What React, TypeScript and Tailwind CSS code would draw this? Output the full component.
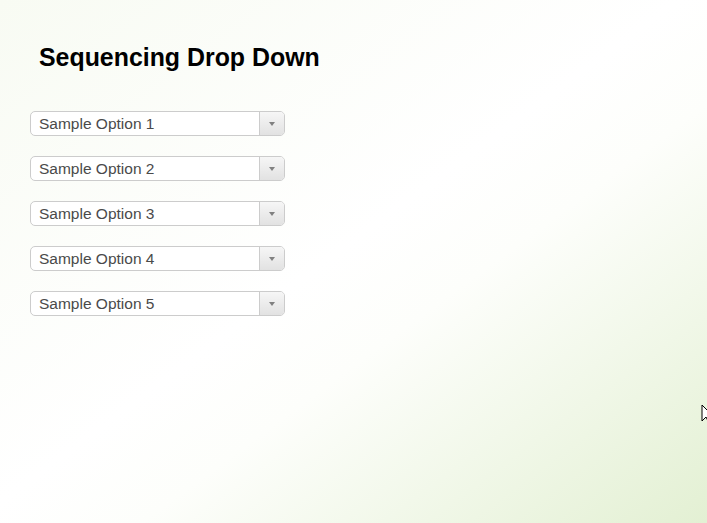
const options = ["Sample Option 1", "Sample Option 2", "Sample Option 3", "Sample Option 4", "Sample Option 5"]

const DropDown = ({ label }: { label: string }) => {
    return (
        <div className="flex h-[25px] w-[255px] rounded-[5px] border border-[#cccccc] bg-white">
            <div className="flex flex-1 items-center pl-[8px] text-[15.5px] text-[#4a4a4a] leading-none">
                {label}
            </div>
            <div className="flex w-[25px] items-center justify-center rounded-r-[4px] border-l border-[#cccccc] bg-gradient-to-b from-[#f6f6f6] to-[#e2e2e2]">
                <span className="mt-[1px] h-0 w-0 border-x-[3.5px] border-t-[4px] border-x-transparent border-t-[#808080]" />
            </div>
        </div>
    )
}

export default function App() {
    return (
        <div
            className="relative h-[523px] w-full overflow-hidden bg-[linear-gradient(to_bottom_right,#f8fbf3_0%,#ffffff_48%,#fdfefb_60%,#e3f0d3_100%)] pl-[30px] pt-[43px]"
            style={{ fontFamily: '"Liberation Sans", Arial, sans-serif' }}
        >
            <h1 className="ml-[9px] text-[24.9px] font-bold leading-[28px] text-black">Sequencing Drop Down</h1>

            <div className="mt-[40px] flex flex-col gap-[20px]">
                {options.map((item, index) => (
                    <DropDown key={index} label={item} />
                ))}
            </div>

            {/* mouse pointer at the right edge */}
            <svg className="absolute left-[701px] top-[404px]" width="12" height="20" viewBox="0 0 12 20">
                <path d="M1 1 L1 17 L5 13 L8 19 L10 18 L7 12 L12 12 Z" fill="#ffffff" stroke="#000000" strokeWidth="1" />
            </svg>
        </div>
    )
}
